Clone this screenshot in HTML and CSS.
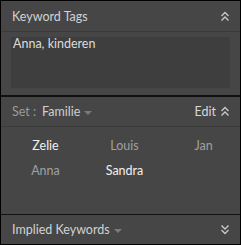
FILE: index.html
```html
<!DOCTYPE html>
<html lang="en">
<head>
    <meta charset="UTF-8">
    <title>Keywording</title>
    <link rel="stylesheet" href="styles.css">
</head>
<body>
    <div class="panel">
        <div class="head">
            <span class="head__title">Keyword Tags</span>
            <svg class="chev" width="10" height="11" viewBox="0 0 10 11">
                <path d="M1.5 5 L5 1.5 L8.5 5 M1.5 9.5 L5 6 L8.5 9.5" fill="none" stroke="#c8c8c8" stroke-width="1.4"/>
            </svg>
        </div>
        <div class="tags">
            <div class="tags__box">Anna, kinderen</div>
        </div>
        <div class="set">
            <span class="set__label">Set :</span>
            <span class="set__name">Familie</span>
            <span class="drop"></span>
            <span class="set__edit">Edit</span>
            <svg class="chev" width="10" height="11" viewBox="0 0 10 11">
                <path d="M1.5 5 L5 1.5 L8.5 5 M1.5 9.5 L5 6 L8.5 9.5" fill="none" stroke="#c8c8c8" stroke-width="1.4"/>
            </svg>
        </div>
        <div class="names">
            <span class="name name--on">Zelie</span>
            <span class="name">Louis</span>
            <span class="name">Jan</span>
            <span class="name">Anna</span>
            <span class="name name--on">Sandra</span>
        </div>
        <div class="head head--last">
            <span class="head__title">Implied Keywords</span>
            <span class="drop"></span>
            <svg class="chev chev--down" width="10" height="11" viewBox="0 0 10 11">
                <path d="M1.5 1.5 L5 5 L8.5 1.5 M1.5 6 L5 9.5 L8.5 6" fill="none" stroke="#c8c8c8" stroke-width="1.4"/>
            </svg>
        </div>
    </div>
</body>
</html>
```

FILE: styles.css
```css
*{
    padding: 0;
    margin: 0;
    box-sizing: border-box;
}
body{
    background-color: #000;
    font-family: Lato, sans-serif;
    font-size: 12.5px;
}
.panel{
    width: 241px;
    height: 245px;
    border: 1px solid #000;
    background-color: #464646;
    display: flex;
    flex-direction: column;
}
.head{
    height: 31px;
    display: flex;
    align-items: center;
    padding: 0 10px 0 11px;
    border-bottom: 1px solid #3a3a3a;
    color: #d2d2d2;
}
.head__title{
    flex: none;
}
.chev{
    margin-left: auto;
    display: block;
}
.head--last{
    height: 30px;
    border-bottom: none;
    border-top: 1px solid #111;
    margin-top: auto;
}
.drop{
    width: 0;
    height: 0;
    border-left: 4px solid transparent;
    border-right: 4px solid transparent;
    border-top: 4px solid #7a7a7a;
    margin-left: 4px;
    margin-top: 2px;
}
.tags{
    height: 65px;
    padding: 5px 10px 0 10px;
    border-bottom: 2px solid #111;
}
.tags__box{
    height: 51px;
    background-color: #3e3e3e;
    color: #dcdcdc;
    padding: 0 2px;
    line-height: 14px;
}
.set{
    height: 30px;
    display: flex;
    align-items: center;
    padding: 0 10px 0 11px;
    border-bottom: 1px solid #3a3a3a;
}
.set__label{
    color: #9a9a9a;
    margin-right: 6px;
}
.set__name{
    color: #cfcfcf;
}
.set__edit{
    margin-left: auto;
    margin-right: 4px;
    color: #d8d8d8;
}
.set .chev{
    margin-left: 0;
}
.names{
    display: grid;
    grid-template-columns: repeat(3, 79px);
    grid-auto-rows: 25px;
    padding: 6px 0 0 5px;
    text-align: center;
    color: #a0a0a0;
}
.name{
    line-height: 25px;
}
.name--on{
    color: #f0f0f0;
}
```
